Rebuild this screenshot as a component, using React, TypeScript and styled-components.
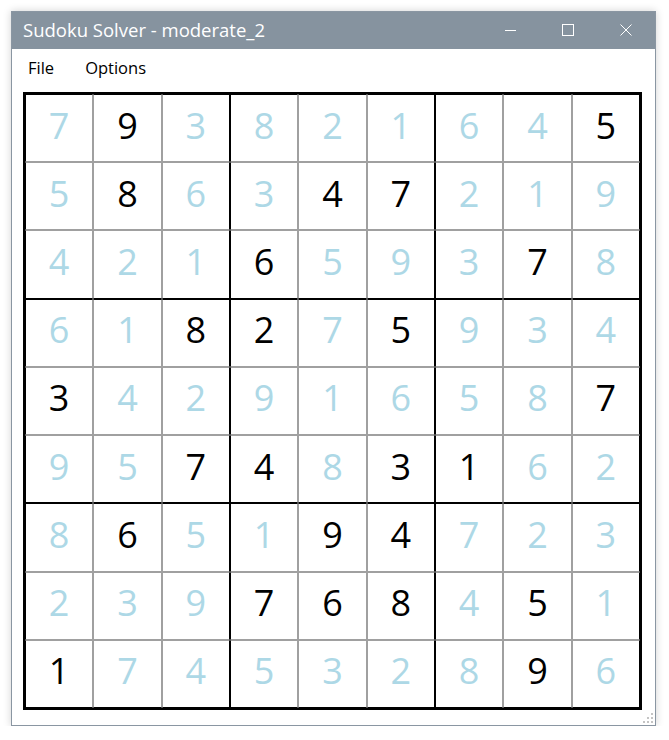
import React from 'react'
import styled, { createGlobalStyle } from 'styled-components'

const values = [
  '793821645',
  '586347219',
  '421659378',
  '618275934',
  '342916587',
  '957483162',
  '865194723',
  '239768451',
  '174532896',
]

// 1 = given clue (black), 0 = solved (light blue)
const givens = [
  '010000001',
  '010011000',
  '000100010',
  '001101000',
  '100000001',
  '001101100',
  '010011000',
  '000111010',
  '100000010',
]

const GlobalStyle = createGlobalStyle`
  html, body {
    margin: 0;
    padding: 0;
    background: #ffffff;
  }
  body {
    font-family: "Open Sans", "Noto Sans", sans-serif;
  }
`

const App = () => {
  return (
    <>
      <GlobalStyle />
      <Window>
        <TitleBar>
          <Title>Sudoku Solver - moderate_2</Title>
          <Controls>
            <CtrlButton>
              <svg width="12" height="12" viewBox="0 0 12 12">
                <line x1="1" y1="6.5" x2="12" y2="6.5" stroke="#fff" strokeWidth="1" />
              </svg>
            </CtrlButton>
            <CtrlButton>
              <svg width="12" height="12" viewBox="0 0 12 12">
                <rect x="0.5" y="0.5" width="11" height="11" fill="none" stroke="#fff" strokeWidth="1" />
              </svg>
            </CtrlButton>
            <CtrlButton>
              <svg width="12" height="12" viewBox="0 0 12 12">
                <path d="M0.5 0.5 L11.5 11.5 M11.5 0.5 L0.5 11.5" stroke="#fff" strokeWidth="1" />
              </svg>
            </CtrlButton>
          </Controls>
        </TitleBar>
        <MenuBar>
          <MenuItem>File</MenuItem>
          <MenuItem>Options</MenuItem>
        </MenuBar>
        <Board>
          {values.map((row, r) =>
            row.split('').map((d, c) => (
              <Cell
                key={r * 9 + c}
                $given={givens[r][c] === '1'}
                $left={c % 3 === 0}
                $right={c % 3 === 2}
                $top={r % 3 === 0}
                $bottom={r % 3 === 2}
              >
                {d}
              </Cell>
            ))
          )}
        </Board>
        <Grip>
          <svg width="12" height="12" viewBox="0 0 12 12">
            {[[10, 2], [10, 6], [6, 6], [10, 10], [6, 10], [2, 10]].map(([x, y], i) => (
              <rect key={i} x={x} y={y} width="2" height="2" fill="#c4c4c4" />
            ))}
          </svg>
        </Grip>
      </Window>
    </>
  )
}

export default App

const Window = styled.div`
  position: relative;
  margin: 11px 0 0 11px;
  width: 645px;
  height: 715px;
  box-sizing: border-box;
  border: 1px solid #8a96a2;
  background: #ffffff;
  box-shadow: 0 0 8px rgba(0, 0, 0, 0.18);
  display: flex;
  flex-direction: column;
`

const TitleBar = styled.div`
  height: 37px;
  background: #86939f;
  display: flex;
  align-items: center;
  justify-content: space-between;
  flex-shrink: 0;
`

const Title = styled.div`
  color: #ffffff;
  font-size: 18.5px;
  padding-left: 11px;
  padding-bottom: 2px;
`

const Controls = styled.div`
  display: flex;
  height: 100%;
`

const CtrlButton = styled.div`
  width: 58px;
  height: 100%;
  display: flex;
  align-items: center;
  justify-content: center;
  padding-bottom: 2px;
  box-sizing: border-box;
`

const MenuBar = styled.div`
  height: 38px;
  display: flex;
  align-items: center;
  padding-left: 8px;
  flex-shrink: 0;
`

const MenuItem = styled.div`
  font-size: 16.5px;
  color: #000000;
  padding: 0 8px;
  margin-right: 15px;
  padding-bottom: 1px;
`

const Board = styled.div`
  margin: 5px 0 0 11px;
  width: 619px;
  height: 618px;
  box-sizing: border-box;
  border: 2px solid #000000;
  display: grid;
  grid-template-columns: repeat(9, 1fr);
  grid-template-rows: repeat(9, 1fr);
`

const Cell = styled.div<{ $given: boolean; $left: boolean; $right: boolean; $top: boolean; $bottom: boolean }>`
  box-sizing: border-box;
  border-style: solid;
  border-width: 1px;
  border-color: ${({ $top }) => ($top ? '#000' : '#a0a0a0')}
    ${({ $right }) => ($right ? '#000' : '#a0a0a0')}
    ${({ $bottom }) => ($bottom ? '#000' : '#a0a0a0')}
    ${({ $left }) => ($left ? '#000' : '#a0a0a0')};
  display: flex;
  align-items: center;
  justify-content: center;
  font-size: 36px;
  line-height: 1;
  padding-bottom: 5px;
  color: ${({ $given }) => ($given ? '#000000' : '#add8e6')};
`

const Grip = styled.div`
  position: absolute;
  right: 2px;
  bottom: 2px;
  width: 12px;
  height: 12px;
  line-height: 0;
`
